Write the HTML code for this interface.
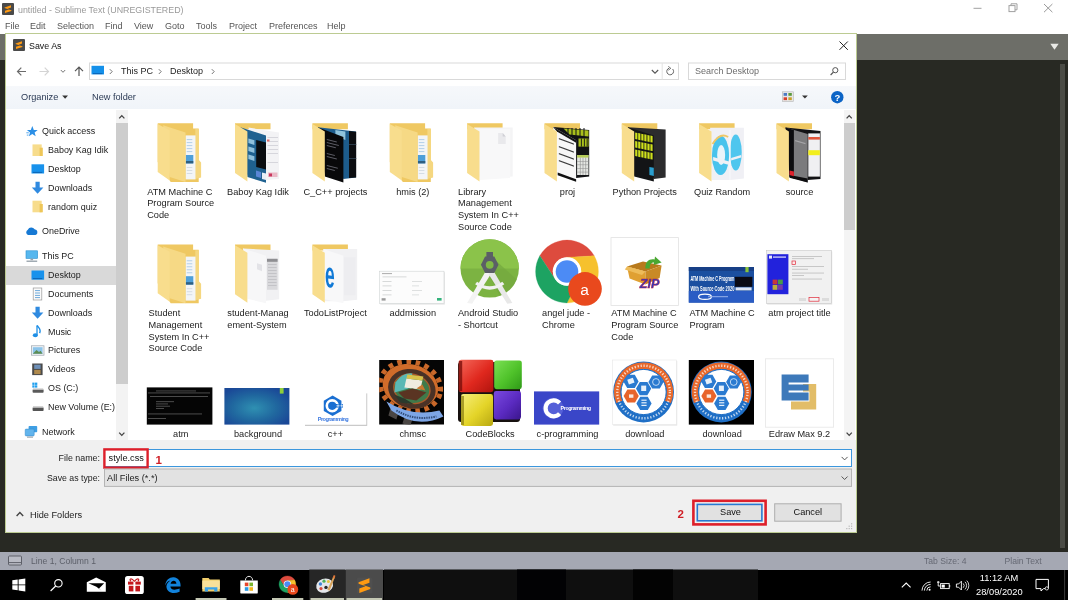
<!DOCTYPE html>
<html>
<head>
<meta charset="utf-8">
<title>Save As</title>
<style>
*{box-sizing:border-box;margin:0;padding:0}
html,body{width:1068px;height:600px;overflow:hidden;background:#282923}
body{position:relative;font-family:"Liberation Sans",sans-serif;font-size:9.2px;color:#222}
#w{position:absolute;left:-12px;top:-12px;width:1092px;height:624px;filter:blur(0.6px)}
#c{position:absolute;left:12px;top:12px;width:1068px;height:600px}
.a{position:absolute}
.t{position:absolute;white-space:nowrap}
svg{position:absolute;overflow:visible}
.cell{position:absolute;width:90px;text-align:center;font-size:9.2px;line-height:11.8px;color:#222}
.cell span{display:inline-block;text-align:left;white-space:nowrap}
</style>
</head>
<body>
<div id="w"><div id="c">
<div class="a" style="left:-12px;top:-12px;width:1092px;height:46px;background:#fff"></div>
<div class="a" style="left:-12px;top:34px;width:1092px;height:26px;background:#6d6e68"></div>
<div class="a" style="left:-12px;top:60px;width:1092px;height:492px;background:#282923"></div>
<div class="a" style="left:1060px;top:64px;width:5px;height:484px;background:#4b4c46"></div>
<div class="a" style="left:-12px;top:552px;width:1092px;height:17.6px;background:#a5a8b3"></div>
<svg style="left:2px;top:3px" width="12" height="12" viewBox="0 0 12 12"><rect x="0" y="0" width="12" height="12" rx="1" fill="#4a4a4a"/><path d="M2.6 4.4 L9 2.3 L9 4.6 L5.2 5.9 L9.4 7.2 L9.4 7.9 L3 10 L3 7.7 L6.8 6.4 L2.6 5.1 Z" fill="#ff9a12"/></svg>
<div class="t" style="left:18px;top:3.5px;color:#999;font-size:8.85px;line-height:12px;">untitled - Sublime Text (UNREGISTERED)</div>
<div class="t" style="left:5px;top:19.5px;color:#555;font-size:9.0px;line-height:12px;">File</div>
<div class="t" style="left:30px;top:19.5px;color:#555;font-size:9.0px;line-height:12px;">Edit</div>
<div class="t" style="left:57px;top:19.5px;color:#555;font-size:9.0px;line-height:12px;">Selection</div>
<div class="t" style="left:105px;top:19.5px;color:#555;font-size:9.0px;line-height:12px;">Find</div>
<div class="t" style="left:134px;top:19.5px;color:#555;font-size:9.0px;line-height:12px;">View</div>
<div class="t" style="left:165px;top:19.5px;color:#555;font-size:9.0px;line-height:12px;">Goto</div>
<div class="t" style="left:196px;top:19.5px;color:#555;font-size:9.0px;line-height:12px;">Tools</div>
<div class="t" style="left:229px;top:19.5px;color:#555;font-size:9.0px;line-height:12px;">Project</div>
<div class="t" style="left:269px;top:19.5px;color:#555;font-size:9.0px;line-height:12px;">Preferences</div>
<div class="t" style="left:327px;top:19.5px;color:#555;font-size:9.0px;line-height:12px;">Help</div>
<svg style="left:0;top:0" width="1068" height="600" viewBox="0 0 1068 600"><path d="M973.5 8.3 H981.5" stroke="#a0a0a0" stroke-width="1" fill="none"/><rect x="1009" y="5.6" width="6" height="6" fill="none" stroke="#a0a0a0" stroke-width="1"/><path d="M1011 5.6 V3.8 H1017 V9.8 H1015" fill="none" stroke="#a0a0a0" stroke-width="1"/><path d="M1044 4 L1052.4 12.2 M1052.4 4 L1044 12.2" stroke="#999" stroke-width="1" fill="none"/></svg>
<svg style="left:0;top:0" width="1068" height="600" viewBox="0 0 1068 600"><path d="M1050.3 43.8 H1058.7 L1054.5 49.8 Z" fill="#e9e9e6"/></svg>
<svg style="left:0;top:0" width="1068" height="600" viewBox="0 0 1068 600"><rect x="8.5" y="556" width="13" height="9" rx="1" fill="#b9bbc4" stroke="#5e6069" stroke-width="1"/><path d="M9 562.6 H21" stroke="#5e6069" stroke-width="1"/></svg>
<div class="t" style="left:31px;top:555.0px;color:#5d606a;font-size:8.6px;line-height:12px;">Line 1, Column 1</div>
<div class="t" style="left:924px;top:555.0px;color:#666974;font-size:8.6px;line-height:12px;">Tab Size: 4</div>
<div class="t" style="left:1004.5px;top:555.0px;color:#666974;font-size:8.6px;line-height:12px;">Plain Text</div>
<div class="a" style="left:-12px;top:569.6px;width:1092px;height:43px;background:#000"></div>
<svg style="left:0;top:0" width="1068" height="600" viewBox="0 0 1068 600"><rect x="309.3" y="569.5" width="35.7" height="30.5" fill="#262626"/><rect x="345.4" y="569.5" width="37.6" height="30.5" fill="#4b4b4b"/><rect x="384" y="569.5" width="374" height="30.5" fill="#0f0f0f"/><rect x="517" y="569.5" width="49" height="30.5" fill="#020204"/><rect x="633" y="569.5" width="40" height="30.5" fill="#030303"/><rect x="195.6" y="598" width="30.900000000000006" height="2" fill="#c4c8b4"/><rect x="272" y="598" width="31.30000000000001" height="2" fill="#c4c8b4"/><rect x="310.5" y="598" width="33.5" height="2" fill="#c4c8b4"/><rect x="346.5" y="598" width="35.5" height="2" fill="#c4c8b4"/><g fill="#fff"><path d="M12.3 580.3 L17.7 579.5 V584.5 H12.3 Z"/><path d="M18.6 579.4 L25.3 578.4 V584.5 H18.6 Z"/><path d="M12.3 585.3 H17.7 V590.3 L12.3 589.5 Z"/><path d="M18.6 585.3 H25.3 V591.4 L18.6 590.4 Z"/></g><circle cx="58.4" cy="583.3" r="3.7" stroke="#fff" stroke-width="1.1" fill="none"/><path d="M55.7 586 L50.6 591" stroke="#fff" stroke-width="1.2"/><path d="M86.8 582.2 L96.2 577.4 L105.8 582.2 V591.8 H86.8 Z" fill="#fff"/><path d="M88.4 583.2 H104.2 L99 588.4 L101.6 590.8 L96.4 586.8 Z" fill="#000"/><rect x="125" y="576" width="18.8" height="18" rx="2.6" fill="#fff"/><g fill="#c4161c"><rect x="128" y="581.6" width="5.4" height="3"/><rect x="135.4" y="581.6" width="5.4" height="3"/><rect x="128.8" y="585.8" width="4.6" height="5.6"/><rect x="135.4" y="585.8" width="4.6" height="5.6"/></g><path d="M134.4 581.4 C131 577 128.6 579.4 131 581.2 M134.4 581.4 C137.8 577 140.2 579.4 137.8 581.2" stroke="#c4161c" stroke-width="1.1" fill="none"/><path d="M165.2 585.6 C165.6 579.6 170 576.9 173.6 577.2 C178.4 577.6 180.9 581.6 180.6 586.4 H170.4 C170.6 589.2 173.4 590.8 179.6 588.6 V591.8 C172.6 594.6 166.6 592.4 166.4 586.2 C166.8 583.4 168.6 581.6 170.6 580.6 C168 580.8 166.2 583 165.2 585.6 Z M170.6 583.8 H176.4 C176.4 579.8 171.2 580 170.6 583.8 Z" fill="#1283dc" fill-rule="evenodd"/><path d="M202.3 578 H208.6 L209.8 579.4 H219.8 V591.6 H202.3 Z" fill="#f2cf6c"/><rect x="202.3" y="580.6" width="17.5" height="8.4" fill="#f8e09a"/><path d="M204.8 591.6 V587.2 H217.4 V591.6 H214.2 V589.6 H208 V591.6 Z" fill="#3aa2ea"/><path d="M240.3 580.4 H257.8 V592.4 Q257.8 593.6 256.6 593.6 H241.5 Q240.3 593.6 240.3 592.4 Z" fill="#fff"/><path d="M245.4 580.4 C245.4 575 252.6 575 252.6 580.4" stroke="#e8e8e8" stroke-width="1" fill="none"/><rect x="244.8" y="582.6" width="3.6" height="3.6" fill="#e8462c"/><rect x="249.4" y="582.6" width="3.6" height="3.6" fill="#7ab52e"/><rect x="244.8" y="587.2" width="3.6" height="3.6" fill="#2a9ae6"/><rect x="249.4" y="587.2" width="3.6" height="3.6" fill="#f2b51e"/><path d="M280.13 580.10 A8.4 8.4 0 0 1 294.67 580.10 L287.19 580.53 A3.78 3.78 0 0 0 284.24 586.37 Z" fill="#dd4b3e" stroke="#dd4b3e" stroke-width="0.3"/><path d="M294.67 580.10 A8.4 8.4 0 0 1 287.40 592.70 L290.78 586.00 A3.78 3.78 0 0 0 287.19 580.53 Z" fill="#f6c12d" stroke="#f6c12d" stroke-width="0.3"/><path d="M287.40 592.70 A8.4 8.4 0 0 1 280.13 580.10 L284.24 586.37 A3.78 3.78 0 0 0 290.78 586.00 Z" fill="#1da362" stroke="#1da362" stroke-width="0.3"/><circle cx="287.4" cy="584.3" r="3.78" fill="#fff"/><circle cx="287.4" cy="584.3" r="3.02" fill="#4c8bf5"/><circle cx="292.8" cy="589.4" r="5.4" fill="#e8481c"/><text x="292.8" y="591.8" font-family="Liberation Sans" font-size="7" fill="#fff" text-anchor="middle">a</text><ellipse cx="324.6" cy="585.6" rx="8.6" ry="7" fill="#e4e6ea" transform="rotate(-18 324.6 585.6)"/><circle cx="320.4" cy="584" r="1.7" fill="#3f86d8"/><circle cx="324" cy="581.2" r="1.6" fill="#4fb05a"/><circle cx="328.4" cy="581.6" r="1.5" fill="#e9c23c"/><circle cx="321" cy="588.6" r="1.6" fill="#d94a3a"/><circle cx="326" cy="587.4" r="1.7" fill="#262626"/><path d="M327.4 589.8 L333.2 576.8 L334.8 577.6 L329.6 590.8 Z" fill="#d9a45c"/><path d="M332.6 577.8 L333.8 575 L335.4 575.8 L334.6 578.6 Z" fill="#e0783a"/><rect x="356.8" y="577.6" width="15.4" height="16" rx="1.4" fill="#4f4f4f"/><path transform="translate(364.4 585.6) scale(1.3 1.4) translate(-364.3 -584.6)" d="M359.8 582.2 L368.2 579.4 V582.6 L363.4 584.2 L368.8 585.9 V587 L360.4 589.8 V586.6 L365.2 585 L359.8 583.3 Z" fill="#ff9a12"/><path d="M901.8 587.4 L906.2 583 L910.6 587.4" stroke="#fff" stroke-width="1.1" fill="none"/><path d="M922 590.6 A8.6 8.6 0 0 1 930.6 582 M924.4 590.6 A6.2 6.2 0 0 1 930.6 584.4 M926.8 590.6 A3.8 3.8 0 0 1 930.6 586.8" stroke="#fff" stroke-width="0.9" fill="none"/><circle cx="929.6" cy="589.8" r="1" fill="#fff"/><rect x="940.6" y="583.6" width="8.6" height="5" fill="none" stroke="#fff" stroke-width="0.9"/><rect x="941.6" y="584.6" width="3.2" height="3" fill="#fff"/><path d="M949.7 585 V587.2 M938.2 581 V584 M937 582.2 H939.6 M938.2 584 V586 H940.4" stroke="#fff" stroke-width="0.9" fill="none"/><path d="M956.4 584 H958.6 L961.4 581.2 V590 L958.6 587.2 H956.4 Z" fill="none" stroke="#fff" stroke-width="0.9"/><path d="M963.2 583.4 A3.2 3.2 0 0 1 963.2 587.8 M965 581.8 A5.4 5.4 0 0 1 965 589.4 M966.8 580.6 A7.2 7.2 0 0 1 966.8 590.6" stroke="#fff" stroke-width="0.8" fill="none"/><path d="M1036 579.4 H1048.4 V588.6 H1043.6 L1041 591 V588.6 H1036 Z" fill="none" stroke="#fff" stroke-width="1"/><circle cx="1046.8" cy="588.4" r="1.6" fill="#000" stroke="#fff" stroke-width="0.8"/><path d="M1064.6 570 V600" stroke="#555" stroke-width="0.7"/><text x="999" y="581" font-family="Liberation Sans" font-size="9.3" fill="#fff" text-anchor="middle">11:12 AM</text><text x="999.3" y="595" font-family="Liberation Sans" font-size="9.3" fill="#fff" text-anchor="middle">28/09/2020</text></svg>
<div class="a" style="left:5px;top:33px;width:852px;height:500px;background:#fff;border:1px solid #bccb92"></div>
<svg style="left:13px;top:39px" width="12" height="12" viewBox="0 0 12 12"><rect x="0" y="0" width="12" height="12" rx="1" fill="#4a4a4a"/><path d="M2.6 4.4 L9 2.3 L9 4.6 L5.2 5.9 L9.4 7.2 L9.4 7.9 L3 10 L3 7.7 L6.8 6.4 L2.6 5.1 Z" fill="#ff9a12"/></svg>
<div class="t" style="left:29px;top:40.0px;color:#111;font-size:8.9px;line-height:12px;">Save As</div>
<svg style="left:0;top:0" width="1068" height="600" viewBox="0 0 1068 600"><path d="M839.5 41.5 L847.8 49.8 M847.8 41.5 L839.5 49.8" stroke="#222" stroke-width="1" fill="none"/></svg>
<svg style="left:0;top:0" width="1068" height="600" viewBox="0 0 1068 600"><path d="M26 71.5 H17.5 M21.3 67.7 L17.5 71.5 L21.3 75.3" stroke="#6b6b6b" stroke-width="1.2" fill="none"/><path d="M39.5 71.5 H48.5 M44.7 67.7 L48.5 71.5 L44.7 75.3" stroke="#d4d4d4" stroke-width="1.2" fill="none"/><path d="M60.8 70 L63 72.3 L65.2 70" stroke="#777" stroke-width="1" fill="none"/><path d="M79 76 V67.2 M75 71.2 L79 67.2 L83 71.2" stroke="#555" stroke-width="1.2" fill="none"/><rect x="89.5" y="63" width="589" height="16.5" fill="#fff" stroke="#d9d9d9" stroke-width="1"/><path d="M662.2 63 V79.5" stroke="#e3e3e3" stroke-width="1"/><rect x="91.5" y="65.8" width="12.5" height="8.6" fill="#1490ea"/><path d="M93 73.6 H102.5" stroke="#0a5fb0" stroke-width="0.9"/><path d="M109.8 69.2 L112.2 71.6 L109.8 74" stroke="#666" stroke-width="0.9" fill="none"/><path d="M158.8 69.2 L161.2 71.6 L158.8 74" stroke="#666" stroke-width="0.9" fill="none"/><path d="M211.8 69.2 L214.2 71.6 L211.8 74" stroke="#666" stroke-width="0.9" fill="none"/><path d="M651.8 70 L655 73.2 L658.2 70" stroke="#555" stroke-width="1.1" fill="none"/><path d="M672.6 69 A3.4 3.4 0 1 1 669 68.2" stroke="#666" stroke-width="1" fill="none"/><path d="M668.3 66.4 L670.8 68.3 L668.3 70.2" stroke="#666" stroke-width="0.9" fill="none"/><rect x="688.5" y="63" width="157" height="16.5" fill="#fff" stroke="#d9d9d9" stroke-width="1"/><circle cx="835.3" cy="70.2" r="2.6" stroke="#555" stroke-width="1" fill="none"/><path d="M833.4 72.2 L830.6 75" stroke="#555" stroke-width="1.2"/></svg>
<div class="t" style="left:121px;top:64.9px;color:#222;font-size:9.0px;line-height:12px;">This PC</div>
<div class="t" style="left:170px;top:64.9px;color:#222;font-size:9.0px;line-height:12px;">Desktop</div>
<div class="t" style="left:695px;top:65.1px;color:#6d6d6d;font-size:9.0px;line-height:12px;">Search Desktop</div>
<div class="a" style="left:6px;top:86px;width:850px;height:23px;background:linear-gradient(#f6f8fb,#f0f4f9)"></div>
<div class="t" style="left:21px;top:91.3px;color:#2b3a55;font-size:9.2px;line-height:12px;">Organize</div>
<div class="t" style="left:92px;top:91.3px;color:#2b3a55;font-size:9.2px;line-height:12px;">New folder</div>
<svg style="left:0;top:0" width="1068" height="600" viewBox="0 0 1068 600"><path d="M62.2 95.6 H68 L65.1 98.8 Z" fill="#333"/><rect x="782.3" y="91.8" width="11" height="9.6" fill="#e6e6e6" stroke="#b5b5b5" stroke-width="0.6"/><rect x="783.6" y="93" width="3.4" height="2.8" fill="#4a78c4"/><rect x="788.4" y="93" width="3.4" height="2.8" fill="#5b9a3c"/><rect x="783.6" y="97.3" width="3.4" height="2.8" fill="#d8402c"/><rect x="788.4" y="97.3" width="3.4" height="2.8" fill="#c9a02c"/><path d="M802 95.4 H807.8 L804.9 98.6 Z" fill="#333"/><circle cx="837.3" cy="97.2" r="6.2" fill="#0c64c6"/><text x="837.3" y="100.6" font-family="Liberation Sans" font-weight="bold" font-size="9.5" fill="#fff" text-anchor="middle">?</text></svg>
<div class="a" style="left:6px;top:266px;width:110px;height:18.5px;background:#d9d9d9"></div>
<div class="a" style="left:116px;top:110px;width:11.5px;height:330px;background:#f3f3f3"></div>
<div class="a" style="left:116px;top:123px;width:11.5px;height:261px;background:#cdcdcd"></div>
<div class="t" style="left:42px;top:125.3px;color:#222;font-size:8.95px;line-height:12px;">Quick access</div>
<svg style="left:0;top:0" width="1068" height="600" viewBox="0 0 1068 600"><path d="M32.3 126.10000000000001 L33.8 129.9 L37.699999999999996 130.0 L34.599999999999994 132.4 L35.699999999999996 136.3 L32.3 134.0 L28.9 136.3 L29.999999999999996 132.4 L26.9 130.0 L30.799999999999997 129.9 Z" fill="#2b8fe6"/><path d="M26.299999999999997 132.8 H28.799999999999997 M26.799999999999997 135.10000000000002 H28.499999999999996" stroke="#2b8fe6" stroke-width="0.8"/></svg>
<div class="t" style="left:48px;top:144.2px;color:#222;font-size:8.95px;line-height:12px;">Baboy Kag Idik</div>
<svg style="left:0;top:0" width="1068" height="600" viewBox="0 0 1068 600"><rect x="32.5" y="144.39999999999998" width="9.2" height="11.6" fill="#f7dc8c"/><rect x="39.6" y="147.7" width="3.2" height="8.3" fill="#eec658"/></svg>
<div class="t" style="left:48px;top:163.0px;color:#222;font-size:8.95px;line-height:12px;">Desktop</div>
<svg style="left:0;top:0" width="1068" height="600" viewBox="0 0 1068 600"><rect x="31.5" y="164.3" width="12.6" height="9.2" fill="#1892ec"/><path d="M32.9 172.4 H42.3" stroke="#0b5fae" stroke-width="0.9"/></svg>
<div class="t" style="left:48px;top:181.7px;color:#222;font-size:8.95px;line-height:12px;">Downloads</div>
<svg style="left:0;top:0" width="1068" height="600" viewBox="0 0 1068 600"><path d="M35.5 181.7 H39.7 V187.39999999999998 H43.4 L37.6 193.7 L31.8 187.39999999999998 H35.5 Z" fill="#2f8ae0"/></svg>
<div class="t" style="left:48px;top:200.5px;color:#222;font-size:8.95px;line-height:12px;">random quiz</div>
<svg style="left:0;top:0" width="1068" height="600" viewBox="0 0 1068 600"><rect x="32.5" y="200.7" width="9.2" height="11.6" fill="#f7dc8c"/><rect x="39.6" y="204.0" width="3.2" height="8.3" fill="#eec658"/></svg>
<div class="t" style="left:42px;top:225.3px;color:#222;font-size:8.95px;line-height:12px;">OneDrive</div>
<svg style="left:0;top:0" width="1068" height="600" viewBox="0 0 1068 600"><path d="M28 235.10000000000002 A3 3 0 0 1 27.8 229.70000000000002 A4 4 0 0 1 34.6 229.3 A3 3 0 0 1 35.5 235.10000000000002 Z" fill="#1679d4"/></svg>
<div class="t" style="left:42px;top:250.2px;color:#222;font-size:8.95px;line-height:12px;">This PC</div>
<svg style="left:0;top:0" width="1068" height="600" viewBox="0 0 1068 600"><rect x="26" y="250.79999999999998" width="11.6" height="7.6" fill="#57b7ee" stroke="#2a8fd0" stroke-width="0.6"/><rect x="30.5" y="258.59999999999997" width="2.6" height="1.6" fill="#9aa4ad"/><path d="M26.5 261.2 H37.2" stroke="#8a96a0" stroke-width="1.2"/></svg>
<div class="t" style="left:48px;top:269.2px;color:#222;font-size:8.95px;line-height:12px;">Desktop</div>
<svg style="left:0;top:0" width="1068" height="600" viewBox="0 0 1068 600"><rect x="31.5" y="270.5" width="12.6" height="9.2" fill="#1892ec"/><path d="M32.9 278.59999999999997 H42.3" stroke="#0b5fae" stroke-width="0.9"/></svg>
<div class="t" style="left:48px;top:288.0px;color:#222;font-size:8.95px;line-height:12px;">Documents</div>
<svg style="left:0;top:0" width="1068" height="600" viewBox="0 0 1068 600"><rect x="33.2" y="288" width="8.6" height="12" fill="#fbfbfb" stroke="#9a9a9a" stroke-width="0.7"/><path d="M35 290.6 H40 M35 293 H40 M35 295.4 H40 M35 297.6 H40" stroke="#5c9fd6" stroke-width="0.9"/></svg>
<div class="t" style="left:48px;top:306.8px;color:#222;font-size:8.95px;line-height:12px;">Downloads</div>
<svg style="left:0;top:0" width="1068" height="600" viewBox="0 0 1068 600"><path d="M35.5 306.8 H39.7 V312.5 H43.4 L37.6 318.8 L31.8 312.5 H35.5 Z" fill="#2f8ae0"/></svg>
<div class="t" style="left:48px;top:325.5px;color:#222;font-size:8.95px;line-height:12px;">Music</div>
<svg style="left:0;top:0" width="1068" height="600" viewBox="0 0 1068 600"><path d="M37 325.5 V335.1" stroke="#1e8fe6" stroke-width="1.3"/><ellipse cx="35.3" cy="335.3" rx="2.5" ry="2" fill="#1e8fe6"/><path d="M37 325.5 C39 328.0 41.5 329.0 39.6 333.1" stroke="#1e8fe6" stroke-width="1.4" fill="none"/></svg>
<div class="t" style="left:48px;top:344.4px;color:#222;font-size:8.95px;line-height:12px;">Pictures</div>
<svg style="left:0;top:0" width="1068" height="600" viewBox="0 0 1068 600"><rect x="31.4" y="345.79999999999995" width="12.6" height="9.4" fill="#f4f6f8" stroke="#9aa3ab" stroke-width="0.7"/><rect x="32.8" y="347.2" width="9.8" height="6.6" fill="#8cc4ea"/><path d="M32.8 353.79999999999995 L36.5 350.0 L39 352.0 L40.6 350.79999999999995 L42.6 353.79999999999995 Z" fill="#5d8d55"/></svg>
<div class="t" style="left:48px;top:363.3px;color:#222;font-size:8.95px;line-height:12px;">Videos</div>
<svg style="left:0;top:0" width="1068" height="600" viewBox="0 0 1068 600"><rect x="32.2" y="363.5" width="10.4" height="11.6" fill="#4a4a4a"/><rect x="34.2" y="364.7" width="6.4" height="4.2" fill="#6d8fb8"/><rect x="34.2" y="369.90000000000003" width="6.4" height="4.2" fill="#b08a4c"/></svg>
<div class="t" style="left:48px;top:382.0px;color:#222;font-size:8.95px;line-height:12px;">OS (C:)</div>
<svg style="left:0;top:0" width="1068" height="600" viewBox="0 0 1068 600"><rect x="32.6" y="389.2" width="11" height="3.6" rx="0.8" fill="#5a5a5a"/><rect x="33" y="388.4" width="10.2" height="1.4" fill="#c9c9c9"/><rect x="32.3" y="382.6" width="2.3" height="2.3" fill="#22a0ee"/><rect x="35" y="382.6" width="2.3" height="2.3" fill="#22a0ee"/><rect x="32.3" y="385.3" width="2.3" height="2.3" fill="#22a0ee"/><rect x="35" y="385.3" width="2.3" height="2.3" fill="#22a0ee"/></svg>
<div class="t" style="left:48px;top:400.6px;color:#222;font-size:8.95px;line-height:12px;">New Volume (E:)</div>
<svg style="left:0;top:0" width="1068" height="600" viewBox="0 0 1068 600"><rect x="32.6" y="407.20000000000005" width="11" height="3.8" rx="0.8" fill="#555"/><rect x="33" y="406.20000000000005" width="10.2" height="1.5" fill="#c9c9c9"/></svg>
<div class="t" style="left:42px;top:425.5px;color:#222;font-size:8.95px;line-height:12px;">Network</div>
<svg style="left:0;top:0" width="1068" height="600" viewBox="0 0 1068 600"><rect x="28.6" y="425.9" width="8.6" height="6.4" rx="0.8" fill="#3f9fe4"/><rect x="25.2" y="429.1" width="9" height="6.8" rx="0.8" fill="#62b4ec" stroke="#2f86c8" stroke-width="0.5"/><path d="M27 437.1 H33" stroke="#8a96a0" stroke-width="1"/></svg>
<div class="a" style="left:843.5px;top:110px;width:11.5px;height:330px;background:#f4f4f4"></div>
<div class="a" style="left:843.5px;top:123px;width:11.5px;height:107px;background:#cdcdcd"></div>
<svg style="left:0;top:0" width="1068" height="600" viewBox="0 0 1068 600"><path d="M119.2 118.4 L121.8 115.6 L124.39999999999999 118.4" stroke="#444" stroke-width="1.3" fill="none"/><path d="M119.2 432.6 L121.8 435.4 L124.39999999999999 432.6" stroke="#444" stroke-width="1.3" fill="none"/><path d="M846.6 118.4 L849.2 115.6 L851.8000000000001 118.4" stroke="#444" stroke-width="1.3" fill="none"/><path d="M846.6 432.6 L849.2 435.4 L851.8000000000001 432.6" stroke="#444" stroke-width="1.3" fill="none"/></svg>
<svg style="left:0;top:0" width="1068" height="600" viewBox="0 0 1068 600"><path d="M157.7 123.2 L193.1 123.2 L193.1 128.6 L198.7 128.6 L198.7 182.0 L170.7 182.0 L157.7 162.0 Z" fill="#efc862" /><path d="M195.3 129.0 L198.9 129.0 L198.9 160.0 L201.1 162.5 L201.1 177.5 L195.3 179.0 Z" fill="#f5d780" /><rect x="185.5" y="135.4" width="10.0" height="44.0" fill="#f3f5f7"/><rect x="186.7" y="139.0" width="5.6" height="1.1" fill="#b9d3ea"/><rect x="186.7" y="142.0" width="5.6" height="1.1" fill="#b9d3ea"/><rect x="186.7" y="145.0" width="5.6" height="1.1" fill="#b9d3ea"/><rect x="186.7" y="148.0" width="5.6" height="1.1" fill="#b9d3ea"/><rect x="186.7" y="151.0" width="5.6" height="1.1" fill="#b9d3ea"/><rect x="185.9" y="155.0" width="7.4" height="8.4" fill="#4e9fd9"/><rect x="185.9" y="161.0" width="7.4" height="2.4" fill="#2f5f80"/><rect x="186.7" y="167.0" width="5.6" height="1.0" fill="#d5dde4"/><rect x="186.7" y="170.0" width="5.6" height="1.0" fill="#d5dde4"/><rect x="186.7" y="173.0" width="5.6" height="1.0" fill="#d5dde4"/><path d="M163.1 125.2 L185.5 132.6 L185.5 182.0 L169.7 177.0 Z" fill="#f6d985" /><path d="M157.7 124.0 L169.7 130.6 L169.7 180.6 L157.7 172.0 Z" fill="#f8dd8d" /></svg>
<div class="cell" style="left:135.7px;top:186.5px"><span>ATM Machine C<br>Program Source<br>Code</span></div>
<svg style="left:0;top:0" width="1068" height="600" viewBox="0 0 1068 600"><path d="M235.0 123.2 L270.5 123.2 L270.5 129.2 L235.0 129.2 Z" fill="#efc862" /><path d="M248.4 127.6 L279.0 132.4 L279.0 179.0 L266.0 180.0 Z" fill="#f3f3f5" /><rect x="267.5" y="137.0" width="10.5" height="0.8" fill="#cfcfd6"/><rect x="267.5" y="141.0" width="10.5" height="0.8" fill="#cfcfd6"/><rect x="267.5" y="145.0" width="10.5" height="0.8" fill="#cfcfd6"/><rect x="267.5" y="149.0" width="10.5" height="0.8" fill="#cfcfd6"/><rect x="267.5" y="153.0" width="10.5" height="0.8" fill="#cfcfd6"/><rect x="267.5" y="162.0" width="10.5" height="0.8" fill="#cfcfd6"/><rect x="267.0" y="139.5" width="2.5" height="2.0" fill="#e06a6a"/><rect x="268.0" y="172.5" width="9.5" height="4.5" fill="#e9b9c6"/><rect x="269.0" y="173.5" width="3.0" height="2.9" fill="#c9365c"/><path d="M240.4 127.2 L266.0 135.6 L266.0 182.8 L247.4 177.0 Z" fill="#1f6190" /><path d="M256.2 140.0 L266.0 142.5 L266.0 169.5 L256.2 167.0 Z" fill="#0a0d10" /><path d="M248.4 138.5 L254.4 140.3 L254.4 144.9 L248.4 143.1 Z" fill="#8fc0dc" /><path d="M248.4 146.5 L254.4 148.3 L254.4 152.9 L248.4 151.1 Z" fill="#8fc0dc" /><path d="M248.4 154.5 L254.4 156.3 L254.4 160.9 L248.4 159.1 Z" fill="#8fc0dc" /><path d="M256.0 170.5 L261.0 172.0 L261.0 178.0 L256.0 176.5 Z" fill="#5a86d6" /><path d="M262.0 172.5 L266.0 173.6 L266.0 180.0 L262.0 179.0 Z" fill="#e8eef6" /><path d="M235.0 124.0 L247.4 131.6 L247.4 181.6 L235.0 173.0 Z" fill="#f8dd8d" /></svg>
<div class="cell" style="left:213.0px;top:186.5px"><span>Baboy Kag Idik</span></div>
<svg style="left:0;top:0" width="1068" height="600" viewBox="0 0 1068 600"><path d="M312.4 123.2 L347.9 123.2 L347.9 129.2 L312.4 129.2 Z" fill="#efc862" /><path d="M317.8 127.2 L356.0 131.4 L356.0 177.6 L343.4 179.0 Z" fill="#1d5c8c" /><path d="M335.4 130.0 L345.4 131.6 L345.4 140.0 L335.4 136.0 Z" fill="#8fc3dc" /><path d="M349.0 131.0 L356.2 131.8 L356.2 177.4 L349.0 178.0 Z" fill="#0c0d10" /><rect x="349.0" y="144.0" width="7.2" height="1.0" fill="#2b3a48"/><rect x="349.0" y="158.0" width="7.2" height="1.0" fill="#2b3a48"/><path d="M317.8 127.2 L343.4 137.0 L343.4 182.4 L324.8 176.6 Z" fill="#08080a" /><path d="M326.8 139.0 L336.8 141.5 L336.8 142.4 L326.8 139.9 Z" fill="#5d5d66" /><path d="M326.8 142.0 L338.8 145.0 L338.8 145.9 L326.8 142.9 Z" fill="#5d5d66" /><path d="M326.8 145.0 L335.8 147.2 L335.8 148.2 L326.8 145.9 Z" fill="#5d5d66" /><path d="M326.8 153.0 L334.8 155.0 L334.8 155.9 L326.8 153.9 Z" fill="#5d5d66" /><path d="M326.8 156.0 L336.8 158.5 L336.8 159.4 L326.8 156.9 Z" fill="#5d5d66" /><path d="M326.8 165.0 L337.8 167.8 L337.8 168.7 L326.8 165.9 Z" fill="#5d5d66" /><path d="M326.8 168.0 L334.8 170.0 L334.8 170.9 L326.8 168.9 Z" fill="#5d5d66" /><path d="M312.4 124.0 L324.8 131.6 L324.8 181.6 L312.4 173.0 Z" fill="#f8dd8d" /></svg>
<div class="cell" style="left:290.4px;top:186.5px"><span>C_C++ projects</span></div>
<svg style="left:0;top:0" width="1068" height="600" viewBox="0 0 1068 600"><path d="M389.8 123.2 L425.1 123.2 L425.1 128.6 L430.8 128.6 L430.8 182.0 L402.8 182.0 L389.8 162.0 Z" fill="#efc862" /><path d="M427.4 129.0 L430.9 129.0 L430.9 160.0 L433.1 162.5 L433.1 177.5 L427.4 179.0 Z" fill="#f5d780" /><rect x="417.6" y="135.4" width="10.0" height="44.0" fill="#f3f5f7"/><rect x="418.8" y="139.0" width="5.6" height="1.1" fill="#b9d3ea"/><rect x="418.8" y="142.0" width="5.6" height="1.1" fill="#b9d3ea"/><rect x="418.8" y="145.0" width="5.6" height="1.1" fill="#b9d3ea"/><rect x="418.8" y="148.0" width="5.6" height="1.1" fill="#b9d3ea"/><rect x="418.8" y="151.0" width="5.6" height="1.1" fill="#b9d3ea"/><rect x="417.9" y="155.0" width="7.4" height="8.4" fill="#4e9fd9"/><rect x="417.9" y="161.0" width="7.4" height="2.4" fill="#2f5f80"/><rect x="418.8" y="167.0" width="5.6" height="1.0" fill="#d5dde4"/><rect x="418.8" y="170.0" width="5.6" height="1.0" fill="#d5dde4"/><rect x="418.8" y="173.0" width="5.6" height="1.0" fill="#d5dde4"/><path d="M395.1 125.2 L417.6 132.6 L417.6 182.0 L401.8 177.0 Z" fill="#f6d985" /><path d="M389.8 124.0 L401.8 130.6 L401.8 180.6 L389.8 172.0 Z" fill="#f8dd8d" /></svg>
<div class="cell" style="left:367.8px;top:186.5px"><span>hmis (2)</span></div>
<svg style="left:0;top:0" width="1068" height="600" viewBox="0 0 1068 600"><path d="M467.1 123.2 L502.6 123.2 L502.6 129.2 L467.1 129.2 Z" fill="#efc862" /><path d="M474.1 127.4 L512.7 127.4 L512.7 176.6 L479.5 177.0 Z" fill="#f4f4f5" /><path d="M479.5 129.0 L510.1 129.0 L510.1 178.0 L479.5 180.0 Z" fill="#f8f8f9" /><path d="M498.1 133.0 L502.7 133.0 L505.7 136.6 L505.7 144.0 L498.1 144.0 Z" fill="#e9e9ec" /><path d="M502.7 133.0 L505.7 136.6 L502.7 136.6 Z" fill="#d0d0d6" /><path d="M467.1 124.0 L479.5 131.6 L479.5 181.6 L467.1 173.0 Z" fill="#f8dd8d" /></svg>
<div class="cell" style="left:443.5px;top:186.5px"><span>Library<br>Management<br>System In C++<br>Source Code</span></div>
<svg style="left:0;top:0" width="1068" height="600" viewBox="0 0 1068 600"><path d="M544.5 123.2 L580.0 123.2 L580.0 129.2 L544.5 129.2 Z" fill="#efc862" /><path d="M553.1 127.0 L589.2 130.0 L589.2 176.6 L576.1 178.0 Z" fill="#111214" /><path d="M563.5 128.4 L588.5 130.6 L588.5 136.4 L569.5 134.4 Z" fill="#a9bf1c" /><rect x="567.5" y="128.0" width="1.0" height="9.0" fill="#111214"/><rect x="571.5" y="128.0" width="1.0" height="9.0" fill="#111214"/><rect x="575.5" y="128.0" width="1.0" height="9.0" fill="#111214"/><rect x="579.5" y="128.0" width="1.0" height="9.0" fill="#111214"/><rect x="583.5" y="128.0" width="1.0" height="9.0" fill="#111214"/><rect x="578.5" y="138.5" width="10.0" height="8.1" fill="#a9bf1c"/><rect x="580.9" y="138.5" width="0.9" height="8.1" fill="#111214"/><rect x="583.9" y="138.5" width="0.9" height="8.1" fill="#111214"/><rect x="586.7" y="138.5" width="0.9" height="8.1" fill="#111214"/><rect x="577.1" y="155.0" width="11.4" height="20.0" fill="#e4e6e2"/><rect x="577.1" y="155.0" width="11.4" height="2.6" fill="#b6cc58"/><rect x="579.9" y="157.6" width="0.6" height="17.4" fill="#8c8c8c"/><rect x="582.7" y="157.6" width="0.6" height="17.4" fill="#8c8c8c"/><rect x="585.5" y="157.6" width="0.6" height="17.4" fill="#8c8c8c"/><rect x="577.1" y="161.0" width="11.4" height="0.5" fill="#8c8c8c"/><rect x="577.1" y="164.6" width="11.4" height="0.5" fill="#8c8c8c"/><rect x="577.1" y="168.2" width="11.4" height="0.5" fill="#8c8c8c"/><rect x="577.1" y="171.8" width="11.4" height="0.5" fill="#8c8c8c"/><path d="M553.1 127.0 L576.1 140.2 L576.1 181.6 L557.7 175.0 Z" fill="#f7f7f7" /><path d="M553.1 127.0 L576.1 140.2 L576.1 142.8 L556.9 131.6 Z" fill="#151515" /><path d="M557.7 172.6 L576.1 179.2 L576.1 181.8 L557.7 175.2 Z" fill="#101010" /><path d="M558.9 138.0 L573.9 143.6 L573.9 144.8 L558.9 139.2 Z" fill="#3c3c3c" /><path d="M558.9 146.0 L573.9 151.6 L573.9 152.8 L558.9 147.2 Z" fill="#3c3c3c" /><path d="M558.9 153.0 L573.9 158.6 L573.9 159.8 L558.9 154.2 Z" fill="#3c3c3c" /><path d="M558.9 160.0 L573.9 165.6 L573.9 166.8 L558.9 161.2 Z" fill="#3c3c3c" /><path d="M544.5 124.0 L556.9 131.6 L556.9 181.6 L544.5 173.0 Z" fill="#f8dd8d" /></svg>
<div class="cell" style="left:522.5px;top:186.5px"><span>proj</span></div>
<svg style="left:0;top:0" width="1068" height="600" viewBox="0 0 1068 600"><path d="M621.8 123.2 L657.3 123.2 L657.3 129.2 L621.8 129.2 Z" fill="#efc862" /><path d="M627.8 127.2 L665.6 129.6 L665.6 177.6 L653.8 179.0 Z" fill="#2b2b2d" /><path d="M627.8 127.2 L653.8 135.6 L653.8 181.6 L634.2 176.4 Z" fill="#131416" /><path d="M635.2 132.5 L637.4 132.9 L637.4 139.5 L635.2 139.1 Z" fill="#cfe01c" /><path d="M638.2 133.1 L640.4 133.6 L640.4 140.2 L638.2 139.7 Z" fill="#cfe01c" /><path d="M641.3 133.7 L643.5 134.2 L643.5 140.8 L641.3 140.3 Z" fill="#cfe01c" /><path d="M644.3 134.3 L646.5 134.8 L646.5 141.4 L644.3 140.9 Z" fill="#cfe01c" /><path d="M647.4 134.9 L649.6 135.4 L649.6 142.0 L647.4 141.5 Z" fill="#cfe01c" /><path d="M650.4 135.6 L652.6 136.0 L652.6 142.6 L650.4 142.2 Z" fill="#cfe01c" /><path d="M635.2 141.0 L637.4 141.4 L637.4 148.0 L635.2 147.6 Z" fill="#cfe01c" /><path d="M638.2 141.6 L640.4 142.1 L640.4 148.7 L638.2 148.2 Z" fill="#cfe01c" /><path d="M641.3 142.2 L643.5 142.7 L643.5 149.3 L641.3 148.8 Z" fill="#cfe01c" /><path d="M644.3 142.8 L646.5 143.3 L646.5 149.9 L644.3 149.4 Z" fill="#cfe01c" /><path d="M647.4 143.4 L649.6 143.9 L649.6 150.5 L647.4 150.0 Z" fill="#cfe01c" /><path d="M650.4 144.1 L652.6 144.5 L652.6 151.1 L650.4 150.7 Z" fill="#cfe01c" /><path d="M635.2 149.5 L637.4 149.9 L637.4 156.5 L635.2 156.1 Z" fill="#cfe01c" /><path d="M638.2 150.1 L640.4 150.6 L640.4 157.2 L638.2 156.7 Z" fill="#cfe01c" /><path d="M641.3 150.7 L643.5 151.2 L643.5 157.8 L641.3 157.3 Z" fill="#cfe01c" /><path d="M644.3 151.3 L646.5 151.8 L646.5 158.4 L644.3 157.9 Z" fill="#cfe01c" /><path d="M647.4 151.9 L649.6 152.4 L649.6 159.0 L647.4 158.5 Z" fill="#cfe01c" /><path d="M650.4 152.6 L652.6 153.0 L652.6 159.6 L650.4 159.2 Z" fill="#cfe01c" /><path d="M649.4 167.0 L653.8 167.8 L653.8 176.0 L649.4 175.0 Z" fill="#2a9ecf" /><path d="M621.8 124.0 L634.2 131.6 L634.2 181.6 L621.8 173.0 Z" fill="#f8dd8d" /></svg>
<div class="cell" style="left:599.8px;top:186.5px"><span>Python Projects</span></div>
<svg style="left:0;top:0" width="1068" height="600" viewBox="0 0 1068 600"><path d="M699.1 123.2 L734.6 123.2 L734.6 129.2 L699.1 129.2 Z" fill="#efc862" /><path d="M710.1 127.8 L743.9 127.8 L743.9 178.6 L730.1 180.0 L711.5 180.0 Z" fill="#f0f0f5" /><ellipse cx="720.5499999999998" cy="155.4" rx="8.6" ry="19.6" fill="#49c3ec"/><ellipse cx="735.7499999999999" cy="152.6" rx="6" ry="18" fill="#4fc6ee"/><ellipse cx="721.1499999999999" cy="155" rx="4" ry="10" fill="#e9f4fa"/><path d="M713.1 157.0 L729.1 161.6 L729.1 165.0 L713.1 160.4 Z" fill="#f0f0f5" /><path d="M731.1 158.0 L741.1 155.0 L741.1 157.6 L731.1 160.6 Z" fill="#f0f0f5" /><path d="M712.5499999999998 144 Q720.1499999999999 132 728.1499999999999 137" stroke="#efc766" stroke-width="1.8" fill="none"/><rect x="729.3" y="130.0" width="1.4" height="50.0" fill="#f6f6fa"/><path d="M699.1 124.0 L711.5 131.6 L711.5 181.6 L699.1 173.0 Z" fill="#f8dd8d" /></svg>
<div class="cell" style="left:677.1px;top:186.5px"><span>Quiz Random</span></div>
<svg style="left:0;top:0" width="1068" height="600" viewBox="0 0 1068 600"><path d="M776.5 123.2 L812.0 123.2 L812.0 129.2 L776.5 129.2 Z" fill="#efc862" /><path d="M785.5 127.4 L820.5 131.0 L820.5 179.0 L807.7 180.0 Z" fill="#121214" /><rect x="808.3" y="133.4" width="11.6" height="43.2" fill="#f0f0f2"/><rect x="808.3" y="137.0" width="11.6" height="2.6" fill="#e0553a"/><rect x="808.3" y="150.2" width="11.6" height="5.0" fill="#f2ee1c"/><path d="M785.5 127.4 L807.7 134.0 L807.7 182.6 L789.5 177.0 Z" fill="#7b7b7d" /><path d="M785.5 127.4 L793.9 130.0 L793.9 178.4 L789.5 177.0 Z" fill="#0d0d0f" /><path d="M789.5 175.0 L807.7 178.6 L807.7 182.6 L789.5 177.8 Z" fill="#0d0d0f" /><path d="M789.5 170.4 L793.9 171.4 L793.9 176.2 L789.5 175.0 Z" fill="#e0212c" /><path d="M795.1 140.0 L805.5 143.0 L805.5 144.2 L795.1 141.2 Z" fill="#a5a5a8" /><path d="M776.5 124.0 L788.9 131.6 L788.9 181.6 L776.5 173.0 Z" fill="#f8dd8d" /></svg>
<div class="cell" style="left:754.5px;top:186.5px"><span>source</span></div>
<svg style="left:0;top:0" width="1068" height="600" viewBox="0 0 1068 600"><path d="M157.7 244.4 L193.1 244.4 L193.1 249.8 L198.7 249.8 L198.7 303.2 L170.7 303.2 L157.7 283.2 Z" fill="#efc862" /><path d="M195.3 250.2 L198.9 250.2 L198.9 281.2 L201.1 283.7 L201.1 298.7 L195.3 300.2 Z" fill="#f5d780" /><rect x="185.5" y="256.6" width="10.0" height="44.0" fill="#f3f5f7"/><rect x="186.7" y="260.2" width="5.6" height="1.1" fill="#b9d3ea"/><rect x="186.7" y="263.2" width="5.6" height="1.1" fill="#b9d3ea"/><rect x="186.7" y="266.2" width="5.6" height="1.1" fill="#b9d3ea"/><rect x="186.7" y="269.2" width="5.6" height="1.1" fill="#b9d3ea"/><rect x="186.7" y="272.2" width="5.6" height="1.1" fill="#b9d3ea"/><rect x="185.9" y="276.2" width="7.4" height="8.4" fill="#4e9fd9"/><rect x="185.9" y="282.2" width="7.4" height="2.4" fill="#2f5f80"/><rect x="186.7" y="288.2" width="5.6" height="1.0" fill="#d5dde4"/><rect x="186.7" y="291.2" width="5.6" height="1.0" fill="#d5dde4"/><rect x="186.7" y="294.2" width="5.6" height="1.0" fill="#d5dde4"/><path d="M163.1 246.4 L185.5 253.8 L185.5 303.2 L169.7 298.2 Z" fill="#f6d985" /><path d="M157.7 245.2 L169.7 251.8 L169.7 301.8 L157.7 293.2 Z" fill="#f8dd8d" /></svg>
<div class="cell" style="left:134.0px;top:308.1px"><span>Student<br>Management<br>System In C++<br>Source Code</span></div>
<svg style="left:0;top:0" width="1068" height="600" viewBox="0 0 1068 600"><path d="M235.0 244.4 L270.5 244.4 L270.5 250.4 L235.0 250.4 Z" fill="#efc862" /><path d="M243.0 248.4 L279.2 250.6 L279.2 299.2 L266.0 300.8 Z" fill="#f1f1f3" /><rect x="267.0" y="258.8" width="10.6" height="31.0" fill="#d9d9dc"/><rect x="267.0" y="258.8" width="10.6" height="3.0" fill="#8e8e92"/><rect x="268.0" y="264.2" width="8.6" height="0.8" fill="#bdbdc2"/><rect x="268.0" y="267.2" width="8.6" height="0.8" fill="#bdbdc2"/><rect x="268.0" y="270.2" width="8.6" height="0.8" fill="#bdbdc2"/><rect x="268.0" y="273.2" width="8.6" height="0.8" fill="#bdbdc2"/><rect x="268.0" y="276.2" width="8.6" height="0.8" fill="#bdbdc2"/><rect x="268.0" y="279.2" width="8.6" height="0.8" fill="#bdbdc2"/><rect x="268.0" y="282.2" width="8.6" height="0.8" fill="#bdbdc2"/><rect x="268.0" y="285.2" width="8.6" height="0.8" fill="#bdbdc2"/><path d="M243.0 248.4 L266.0 255.8 L266.0 303.2 L247.4 298.8 Z" fill="#f7f7f8" /><path d="M257.0 263.2 L262.0 264.8 L262.0 271.2 L257.0 269.2 Z" fill="#e3e3e7" /><path d="M235.0 245.2 L247.4 252.8 L247.4 302.8 L235.0 294.2 Z" fill="#f8dd8d" /></svg>
<div class="cell" style="left:213.0px;top:308.1px"><span>student-Manag<br>ement-System</span></div>
<svg style="left:0;top:0" width="1068" height="600" viewBox="0 0 1068 600"><path d="M312.4 244.4 L347.9 244.4 L347.9 250.4 L312.4 250.4 Z" fill="#efc862" /><path d="M323.4 249.0 L357.2 249.0 L357.2 299.8 L343.4 301.2 L324.8 301.2 Z" fill="#f1f1f3" /><path d="M323.4 249.0 L343.4 255.8 L343.4 303.2 L324.8 299.2 Z" fill="#f8f8f9" /><rect x="344.0" y="257.2" width="11.4" height="38.0" fill="#ededf0"/><text transform="translate(325.0 286.8) skewY(8) scale(0.47 1)" font-family="Liberation Sans" font-weight="bold" font-size="37" fill="#1079d6">e</text><path d="M312.4 245.2 L324.8 252.8 L324.8 302.8 L312.4 294.2 Z" fill="#f8dd8d" /></svg>
<div class="cell" style="left:290.4px;top:308.1px"><span>TodoListProject</span></div>
<svg style="left:0;top:0" width="1068" height="600" viewBox="0 0 1068 600"><rect x="380.40000000000003" y="272.2" width="64.39999999999998" height="32.400000000000034" fill="#d9d9d9" opacity="0.7"/><rect x="379.6" y="271.2" width="64.39999999999998" height="32.400000000000034" fill="#fcfcfc" stroke="#d0d4d4" stroke-width="0.6"/><rect x="382.5" y="276.5" width="24" height="0.8" fill="#cdd0d0"/><rect x="382.5" y="281" width="9" height="0.8" fill="#cdd0d0"/><rect x="412" y="281" width="10" height="0.8" fill="#d6d9d9"/><rect x="382.5" y="285.5" width="9" height="0.8" fill="#cdd0d0"/><rect x="412" y="285.5" width="7" height="0.8" fill="#d6d9d9"/><rect x="382.5" y="290" width="9" height="0.8" fill="#cdd0d0"/><rect x="412" y="290" width="10" height="0.8" fill="#d6d9d9"/><rect x="382.5" y="294.5" width="9" height="0.8" fill="#cdd0d0"/><rect x="412" y="294.5" width="7" height="0.8" fill="#d6d9d9"/><rect x="381.6" y="298.2" width="4" height="2.4" fill="#9a9a9a"/><rect x="437" y="298" width="4.6" height="2.6" fill="#34b37c"/><path d="M382 273.6 H392" stroke="#888" stroke-width="0.7"/></svg>
<div class="cell" style="left:367.8px;top:308.1px"><span>addmission</span></div>
<svg style="left:0;top:0" width="1068" height="600" viewBox="0 0 1068 600"><circle cx="489.7" cy="268.4" r="29.2" fill="#7cb342"/><path d="M460.5 268.4 A29.2 29.2 0 0 1 518.9 268.4 Z" fill="#8bc34a"/><path d="M494.7 259.4 L516.7 279.4 A29.2 29.2 0 0 1 499.7 295.79999999999995 L487.7 272.4 Z" fill="#74a83e" opacity="0.7"/><path d="M486.7 269.4 L467.09999999999997 303.0 L472.09999999999997 303.79999999999995 L490.9 274.0 Z" fill="#f3f3f3"/><path d="M492.7 269.4 L512.3 303.0 L507.3 303.79999999999995 L488.5 274.0 Z" fill="#e8e8e8"/><path d="M476.09999999999997 283.0 Q489.7 293.0 503.3 283.0" stroke="#f1f1f1" stroke-width="3.4" fill="none"/><rect x="486.4" y="251.99999999999997" width="6.6" height="7" fill="#5b5f66"/><path d="M485.09999999999997 256.59999999999997 H494.3 L498.5 264.79999999999995 L494.3 272.99999999999994 H485.09999999999997 L480.9 264.79999999999995 Z" fill="#5b5f66"/><circle cx="489.7" cy="264.79999999999995" r="3.9" fill="#7fb844"/></svg>
<div class="cell" style="left:443.1px;top:308.1px"><span>Android Studio<br>- Shortcut</span></div>
<svg style="left:0;top:0" width="1068" height="600" viewBox="0 0 1068 600"><path d="M539.81 255.80 A31.4 31.4 0 0 1 594.19 255.80 L566.20 257.39 A14.13 14.13 0 0 0 555.18 279.25 Z" fill="#dd4b3e" stroke="#dd4b3e" stroke-width="0.3"/><path d="M594.19 255.80 A31.4 31.4 0 0 1 567.00 302.90 L579.62 277.86 A14.13 14.13 0 0 0 566.20 257.39 Z" fill="#f6c12d" stroke="#f6c12d" stroke-width="0.3"/><path d="M567.00 302.90 A31.4 31.4 0 0 1 539.81 255.80 L555.18 279.25 A14.13 14.13 0 0 0 579.62 277.86 Z" fill="#1da362" stroke="#1da362" stroke-width="0.3"/><circle cx="567" cy="271.5" r="14.13" fill="#fff"/><circle cx="567" cy="271.5" r="11.30" fill="#4c8bf5"/><circle cx="585" cy="288.9" r="16.8" fill="#e9491d"/><text x="584.6" y="294.6" font-family="Liberation Sans" font-size="15.5" fill="#fff" text-anchor="middle">a</text></svg>
<div class="cell" style="left:521.1px;top:308.1px"><span>angel jude -<br>Chrome</span></div>
<svg style="left:0;top:0" width="1068" height="600" viewBox="0 0 1068 600"><rect x="611" y="237.6" width="67.6" height="67.8" fill="#fff" stroke="#e2e2e2" stroke-width="0.8"/><path d="M627 266.4 L643 261.4 L661.6 265.6 L645.4 271.6 Z" fill="#b87a1c"/><path d="M627 266.4 L645.4 271.6 V284.4 L629.6 278.4 Z" fill="#e0a032"/><path d="M645.4 271.6 L661.6 265.6 L659.6 278 L645.4 284.4 Z" fill="#c98a26"/><path d="M627 266.4 L645.4 271.6 L642 275 L624.8 269.6 Z" fill="#eebc5a"/><path d="M645.4 268.4 C645 261.6 649.6 258.4 654.6 259.6 L655 256.6 L661.6 262.4 L653.6 265 L654 262.4 C650.6 262.4 649.6 265 649.8 268.4 Z" fill="#4aa832"/><text x="649.6" y="287.8" font-family="Liberation Sans" font-weight="bold" font-style="italic" font-size="12.5" text-anchor="middle" fill="#2a3ac0" stroke="#c0203c" stroke-width="0.5">ZIP</text></svg>
<div class="cell" style="left:599.8px;top:308.1px"><span>ATM Machine C<br>Program Source<br>Code</span></div>
<svg style="left:0;top:0" width="1068" height="600" viewBox="0 0 1068 600"><rect x="688.8" y="267" width="65.2" height="35.6" fill="#1b4fa0"/><rect x="688.8" y="291" width="65.2" height="11.6" fill="#2a5cc4"/><rect x="688.8" y="267" width="65.2" height="4" fill="#173f86"/><rect x="745.4" y="267" width="3.2" height="5.2" fill="#8ac43a"/><rect x="734.8" y="276.8" width="17.6" height="10" fill="#0a0a14"/><rect x="735.6" y="287.4" width="16" height="3" fill="#dfe6f4"/><text x="690.4" y="281" font-family="Liberation Sans" font-weight="bold" font-size="6.6" fill="#fff" textLength="44" lengthAdjust="spacingAndGlyphs">ATM Machine C Program</text><text x="690.4" y="290.6" font-family="Liberation Sans" font-weight="bold" font-size="6.6" fill="#fff" textLength="44" lengthAdjust="spacingAndGlyphs">With Source Code 2020</text><ellipse cx="705" cy="296.8" rx="6.4" ry="2.6" fill="none" stroke="#fff" stroke-width="1.2"/><rect x="708" y="296.2" width="20" height="1" fill="#9ab4ea"/></svg>
<div class="cell" style="left:677.1px;top:308.1px"><span>ATM Machine C<br>Program</span></div>
<svg style="left:0;top:0" width="1068" height="600" viewBox="0 0 1068 600"><rect x="767.1999999999999" y="251.4" width="65.0" height="53.20000000000002" fill="#d9d9d9" opacity="0.7"/><rect x="766.4" y="250.4" width="65.0" height="53.20000000000002" fill="#f1f1f1" stroke="#c8c8c8" stroke-width="0.6"/><rect x="767.4" y="254.2" width="21" height="40" fill="#2222dc"/><rect x="769" y="255.6" width="3" height="3" fill="#e8e8f8"/><rect x="773" y="256.4" width="13" height="1.4" fill="#c6c6f6"/><rect x="772.6" y="279.6" width="4.8" height="4.8" fill="#c8383a"/><rect x="778" y="279.6" width="4.8" height="4.8" fill="#4a9a48"/><rect x="772.6" y="285" width="4.8" height="4.8" fill="#bfae3a"/><rect x="778" y="285" width="4.8" height="4.8" fill="#7a3aa8"/><rect x="792" y="256" width="30" height="0.9" fill="#c2c2c2"/><rect x="792" y="258.2" width="22" height="0.9" fill="#c2c2c2"/><rect x="792" y="266" width="32" height="0.9" fill="#c2c2c2"/><rect x="792" y="268.8" width="16" height="0.9" fill="#c2c2c2"/><rect x="792" y="272.6" width="32" height="0.9" fill="#c2c2c2"/><rect x="792" y="275" width="12" height="0.9" fill="#c2c2c2"/><rect x="792" y="278.6" width="30" height="0.9" fill="#c2c2c2"/><rect x="792" y="261" width="3.4" height="3.6" fill="#fbeaea" stroke="#e02a3a" stroke-width="0.7"/><rect x="809" y="297.6" width="10" height="3.6" fill="#f4f4f4" stroke="#e02a3a" stroke-width="0.7"/><rect x="799" y="298" width="7" height="3" fill="#dcdcdc"/><rect x="822" y="298" width="7" height="3" fill="#dcdcdc"/></svg>
<div class="cell" style="left:754.5px;top:308.1px"><span>atm project title</span></div>
<svg style="left:0;top:0" width="1068" height="600" viewBox="0 0 1068 600"><rect x="146.8" y="387.4" width="65.6" height="37.2" fill="#050505"/><rect x="156" y="390.6" width="40" height="0.7" fill="#6a6a6a"/><rect x="148" y="392.6" width="62" height="0.7" fill="#6a6a6a"/><rect x="150" y="396" width="58" height="0.7" fill="#6a6a6a"/><rect x="156" y="401.4" width="18" height="0.7" fill="#6a6a6a"/><rect x="156" y="403.6" width="12" height="0.7" fill="#6a6a6a"/><rect x="156" y="405.8" width="14" height="0.7" fill="#6a6a6a"/><rect x="156" y="408" width="8" height="0.7" fill="#6a6a6a"/><rect x="148" y="413.6" width="54" height="0.7" fill="#6a6a6a"/><rect x="148" y="418" width="18" height="0.7" fill="#6a6a6a"/></svg>
<div class="cell" style="left:135.7px;top:428.9px"><span>atm</span></div>
<svg style="left:0;top:0" width="1068" height="600" viewBox="0 0 1068 600"><defs><radialGradient id="bgg" cx="0.46" cy="0.55" r="0.62"><stop offset="0" stop-color="#2f90b2"/><stop offset="0.55" stop-color="#20689f"/><stop offset="1" stop-color="#1a4897"/></radialGradient></defs><rect x="224.4" y="388" width="65" height="36.6" fill="url(#bgg)"/><rect x="279.8" y="388" width="3.8" height="5.6" fill="#8fcf3a"/></svg>
<div class="cell" style="left:213.0px;top:428.9px"><span>background</span></div>
<svg style="left:0;top:0" width="1068" height="600" viewBox="0 0 1068 600"><rect x="305" y="393.4" width="62.2" height="32.4" fill="#bdbdbd"/><rect x="304.2" y="392.4" width="62.2" height="32.4" fill="#fff"/><path d="M341.43 410.90 L332.60 416.00 L323.77 410.90 L323.77 400.70 L332.60 395.60 L341.43 400.70 Z" fill="#1a6fd2"/><circle cx="332.2" cy="405.8" r="5.4" fill="none" stroke="#fff" stroke-width="2.6"/><rect x="335" y="404" width="8" height="3.6" fill="#1a6fd2"/><path d="M336.4 405.8 H339.6 M338 404.2 V407.4 M340.4 405.8 H343.2 M341.8 404.2 V407.4" stroke="#fff" stroke-width="0.7"/><text x="333.2" y="421" font-family="Liberation Sans" font-weight="bold" font-size="5.6" fill="#3a78e0" text-anchor="middle" textLength="31">Programming</text></svg>
<div class="cell" style="left:290.4px;top:428.9px"><span>c++</span></div>
<svg style="left:0;top:0" width="1068" height="600" viewBox="0 0 1068 600"><rect x="379.2" y="360" width="64.8" height="64.5" fill="#050505"/><clipPath id="chc"><rect x="379.2" y="360" width="64.8" height="64.5"/></clipPath><g clip-path="url(#chc)"><g transform="rotate(14 410.4 386.4)"><ellipse cx="410.4" cy="386.4" rx="30.5" ry="24.5" fill="none" stroke="#c8682a" stroke-width="5" stroke-dasharray="4.6 4.6"/><ellipse cx="410.4" cy="386.4" rx="28" ry="22" fill="#d06c2a"/><ellipse cx="412.4" cy="388.4" rx="24" ry="19.6" fill="#4a3226"/><ellipse cx="412.4" cy="388.4" rx="19" ry="15.2" fill="#a85a2a"/><ellipse cx="412.4" cy="388.4" rx="17.6" ry="13.8" fill="#3f7a4a"/></g><path d="M395.4 382.4 Q402.4 372.4 412.4 373.4 L408.4 388.4 L394.4 392.4 Z" fill="#5ab8b4"/><path d="M406.4 378.4 L422.4 380.4 L420.4 389.4 L404.4 387.4 Z" fill="#f0ece0"/><path d="M407.4 374.4 L423.4 376.4 L422.4 380.4 L406.4 378.4 Z" fill="#d8c24a"/><path d="M398.4 392.4 L412.4 388.4 L426.4 392.4 L416.4 400.4 L404.4 398.4 Z" fill="#5a3422"/><path d="M416.4 388.4 L422.4 384.4 L425.4 390.4 Z" fill="#c87830"/><path d="M394.4 394.4 L404.4 398.4 L414.4 404.4 L400.4 402.4 Z" fill="#2a3a2c"/><path d="M390.4 408.4 L398.4 412.4 L396.4 419.4 L388.4 415.4 Z M404.4 417.4 L412.4 419.4 L410.4 425.4 L402.4 423.4 Z" fill="#4a4644"/><path d="M386.4 401.4 Q412.4 417.4 439.4 410.4 L443.4 416.4 Q416.4 429.4 391.4 410.4 Z" fill="#7da6e6"/><path d="M396.4 410.4 Q414.4 421.4 436.4 416.4" stroke="#34507e" stroke-width="2" fill="none" stroke-dasharray="1.5 0.9"/></g></svg>
<div class="cell" style="left:367.8px;top:428.9px"><span>chmsc</span></div>
<svg style="left:0;top:0" width="1068" height="600" viewBox="0 0 1068 600"><rect x="458" y="362" width="62" height="60" rx="3" fill="#17110f"/><defs><linearGradient id="cbg" x1="0" y1="0" x2="1" y2="1"><stop offset="0" stop-color="#7be054"/><stop offset="0.55" stop-color="#4fc22a"/><stop offset="1" stop-color="#2f9a18"/></linearGradient></defs><rect x="494.2" y="360.4" width="27.599999999999966" height="28.80000000000001" rx="2.4" fill="url(#cbg)"/><defs><linearGradient id="cbp" x1="0" y1="0" x2="1" y2="1"><stop offset="0" stop-color="#7a4ae0"/><stop offset="0.55" stop-color="#5a2ac0"/><stop offset="1" stop-color="#3a168c"/></linearGradient></defs><rect x="493.8" y="391" width="27.19999999999999" height="28.399999999999977" rx="2.4" fill="url(#cbp)"/><defs><linearGradient id="cbr" x1="0" y1="0" x2="1" y2="1"><stop offset="0" stop-color="#f4685a"/><stop offset="0.55" stop-color="#e0281e"/><stop offset="1" stop-color="#b0140e"/></linearGradient></defs><rect x="458.8" y="359.8" width="34.599999999999966" height="32.39999999999998" rx="2.4" fill="url(#cbr)"/><defs><linearGradient id="cby" x1="0" y1="0" x2="1" y2="1"><stop offset="0" stop-color="#f6ee7a"/><stop offset="0.55" stop-color="#e4d428"/><stop offset="1" stop-color="#b8a812"/></linearGradient></defs><rect x="461" y="394" width="32" height="32" rx="2.4" fill="url(#cby)"/><rect x="458.8" y="361" width="3.4" height="30" fill="#7a0e0a" opacity="0.8"/><rect x="461" y="396" width="3" height="29" fill="#8a7e10" opacity="0.7"/></svg>
<div class="cell" style="left:445.1px;top:428.9px"><span>CodeBlocks</span></div>
<svg style="left:0;top:0" width="1068" height="600" viewBox="0 0 1068 600"><rect x="534" y="391.4" width="65.2" height="33.2" fill="#3a46c8"/><circle cx="553" cy="408.2" r="10.4" fill="#5560d8"/><path d="M559.6 403 A8 8 0 1 0 559.6 413.6" stroke="#fff" stroke-width="4.2" fill="none"/><text x="560.6" y="410" font-family="Liberation Sans" font-weight="bold" font-size="5.4" fill="#fff" textLength="30.4">Programming</text></svg>
<div class="cell" style="left:522.5px;top:428.9px"><span>c-programming</span></div>
<svg style="left:0;top:0" width="1068" height="600" viewBox="0 0 1068 600"><rect x="613.1999999999999" y="361" width="64.0" height="64.60000000000002" fill="#d9d9d9" opacity="0.7"/><rect x="612.4" y="360" width="64.0" height="64.60000000000002" fill="#fff" stroke="#e6e6e6" stroke-width="0.6"/><circle cx="643.6" cy="392" r="30.4" fill="#1f6fc6"/><path d="M619.22 401.85 A26.3 26.3 0 1 1 667.98 401.85" stroke="#e8682a" stroke-width="6.4" fill="none"/><circle cx="643.6" cy="392" r="26.3" fill="none" stroke="#fff" stroke-width="2.4" stroke-dasharray="1.3 1.7" opacity="0.72"/><circle cx="643.6" cy="392" r="22.6" fill="#fff" stroke="#1f6fc6" stroke-width="1"/><path d="M638.60 381.40 L634.80 387.98 L627.20 387.98 L623.40 381.40 L627.20 374.82 L634.80 374.82 Z" fill="#2a7ad0"/><path d="M663.60 382.00 L659.80 388.58 L652.20 388.58 L648.40 382.00 L652.20 375.42 L659.80 375.42 Z" fill="#2a7ad0"/><path d="M651.20 388.60 L647.40 395.18 L639.80 395.18 L636.00 388.60 L639.80 382.02 L647.40 382.02 Z" fill="#2a7ad0"/><path d="M638.80 396.00 L635.00 402.58 L627.40 402.58 L623.60 396.00 L627.40 389.42 L635.00 389.42 Z" fill="#e8642a"/><path d="M651.60 403.40 L647.80 409.98 L640.20 409.98 L636.40 403.40 L640.20 396.82 L647.80 396.82 Z" fill="#2a7ad0"/><circle cx="656.0" cy="382" r="3.4" fill="none" stroke="#cfe2f6" stroke-width="0.9"/><rect x="628.0" y="378.6" width="6" height="5" fill="#e6f0fa" transform="rotate(-20 631.0 381.4)"/><rect x="641.2" y="385.6" width="5" height="5.4" fill="#e6f0fa"/><rect x="629.0" y="394.4" width="4.4" height="3.4" fill="#fbe6da"/><rect x="641.4" y="399.6" width="5.2" height="1.2" fill="#e6f0fa"/><rect x="641.4" y="402.2" width="5.2" height="1.2" fill="#e6f0fa"/><rect x="641.4" y="404.8" width="5.2" height="1.2" fill="#e6f0fa"/></svg>
<div class="cell" style="left:599.8px;top:428.9px"><span>download</span></div>
<svg style="left:0;top:0" width="1068" height="600" viewBox="0 0 1068 600"><rect x="688.8" y="360" width="65.2" height="64.6" fill="#000"/><circle cx="721.3" cy="392" r="30.4" fill="#1f6fc6"/><path d="M696.92 401.85 A26.3 26.3 0 1 1 745.68 401.85" stroke="#e8682a" stroke-width="6.4" fill="none"/><circle cx="721.3" cy="392" r="26.3" fill="none" stroke="#fff" stroke-width="2.4" stroke-dasharray="1.3 1.7" opacity="0.72"/><circle cx="721.3" cy="392" r="22.6" fill="#fff" stroke="#1f6fc6" stroke-width="1"/><path d="M716.30 381.40 L712.50 387.98 L704.90 387.98 L701.10 381.40 L704.90 374.82 L712.50 374.82 Z" fill="#2a7ad0"/><path d="M741.30 382.00 L737.50 388.58 L729.90 388.58 L726.10 382.00 L729.90 375.42 L737.50 375.42 Z" fill="#2a7ad0"/><path d="M728.90 388.60 L725.10 395.18 L717.50 395.18 L713.70 388.60 L717.50 382.02 L725.10 382.02 Z" fill="#2a7ad0"/><path d="M716.50 396.00 L712.70 402.58 L705.10 402.58 L701.30 396.00 L705.10 389.42 L712.70 389.42 Z" fill="#e8642a"/><path d="M729.30 403.40 L725.50 409.98 L717.90 409.98 L714.10 403.40 L717.90 396.82 L725.50 396.82 Z" fill="#2a7ad0"/><circle cx="733.6999999999999" cy="382" r="3.4" fill="none" stroke="#cfe2f6" stroke-width="0.9"/><rect x="705.6999999999999" y="378.6" width="6" height="5" fill="#e6f0fa" transform="rotate(-20 708.6999999999999 381.4)"/><rect x="718.9" y="385.6" width="5" height="5.4" fill="#e6f0fa"/><rect x="706.6999999999999" y="394.4" width="4.4" height="3.4" fill="#fbe6da"/><rect x="719.0999999999999" y="399.6" width="5.2" height="1.2" fill="#e6f0fa"/><rect x="719.0999999999999" y="402.2" width="5.2" height="1.2" fill="#e6f0fa"/><rect x="719.0999999999999" y="404.8" width="5.2" height="1.2" fill="#e6f0fa"/></svg>
<div class="cell" style="left:677.1px;top:428.9px"><span>download</span></div>
<svg style="left:0;top:0" width="1068" height="600" viewBox="0 0 1068 600"><rect x="765.4" y="358.8" width="68.2" height="68.4" fill="#fff" stroke="#e6e6e6" stroke-width="0.8"/><path d="M803 384 H816.2 V409.4 H791 V401.6 H809.4 V391.4 H803 Z" fill="#e2bd68"/><path d="M781.6 374.6 H808.6 V382.4 H788.6 V384.6 H808.6 V390.4 H788.6 V392.6 H808.6 V400.4 H781.6 Z" fill="#3d79ba"/></svg>
<div class="cell" style="left:754.5px;top:428.9px"><span>Edraw Max 9.2</span></div>
<div class="a" style="left:6px;top:440px;width:850px;height:92px;background:#f0f0f0"></div>
<svg style="left:0;top:0" width="1068" height="600" viewBox="0 0 1068 600"><rect x="104.5" y="449.5" width="747" height="17" fill="#fff" stroke="#3c97dd" stroke-width="1"/><rect x="104.4" y="449.4" width="43.2" height="18.2" fill="none" stroke="#dd1f2a" stroke-width="2.4"/><rect x="104.5" y="469" width="747" height="17.4" fill="#e2e2e2" stroke="#b4b4b4" stroke-width="1"/><path d="M841.6 456.9 L844.6 459.9 L847.6 456.9" stroke="#555" stroke-width="1" fill="none"/><path d="M841.6 476.5 L844.6 479.5 L847.6 476.5" stroke="#555" stroke-width="1" fill="none"/><path d="M16.6 516 L19.9 512.6 L23.2 516" stroke="#444" stroke-width="1.4" fill="none"/><rect x="693.4" y="500.8" width="72.2" height="23.6" fill="none" stroke="#dd1f2a" stroke-width="2.6"/><rect x="697.3" y="504.4" width="64.6" height="16.4" fill="#e1e1e1" stroke="#2878d0" stroke-width="1.6"/><rect x="774.7" y="503.8" width="66.4" height="17.4" fill="#e1e1e1" stroke="#adadad" stroke-width="1"/><g fill="#b8b8b8"><rect x="851" y="528" width="1.2" height="1.2"/><rect x="848.6" y="528" width="1.2" height="1.2"/><rect x="851" y="525.6" width="1.2" height="1.2"/><rect x="846.2" y="528" width="1.2" height="1.2"/><rect x="851" y="523.2" width="1.2" height="1.2"/><rect x="848.6" y="525.6" width="1.2" height="1.2"/></g></svg>
<div class="t" style="right:968px;top:452.3px;color:#222;font-size:8.9px;line-height:12px;">File name:</div>
<div class="t" style="right:968px;top:472.0px;color:#222;font-size:8.75px;line-height:12px;">Save as type:</div>
<div class="t" style="left:108.6px;top:452.3px;color:#111;font-size:9.2px;line-height:12px;">style.css</div>
<div class="t" style="left:107px;top:472.0px;color:#222;font-size:9.2px;line-height:12px;">All Files (*.*)</div>
<div class="t" style="left:155.6px;top:453.6px;color:#d01f26;font-size:11.5px;line-height:12px;font-weight:bold">1</div>
<div class="t" style="left:677.6px;top:508.4px;color:#d01f26;font-size:11.5px;line-height:12px;font-weight:bold">2</div>
<div class="t" style="left:30px;top:508.5px;color:#222;font-size:9.2px;line-height:12px;">Hide Folders</div>
<div class="t" style="left:720px;top:506.3px;color:#111;font-size:9.2px;line-height:12px;">Save</div>
<div class="t" style="left:793.5px;top:506.3px;color:#111;font-size:9.2px;line-height:12px;">Cancel</div>
</div></div>
</body>
</html>
